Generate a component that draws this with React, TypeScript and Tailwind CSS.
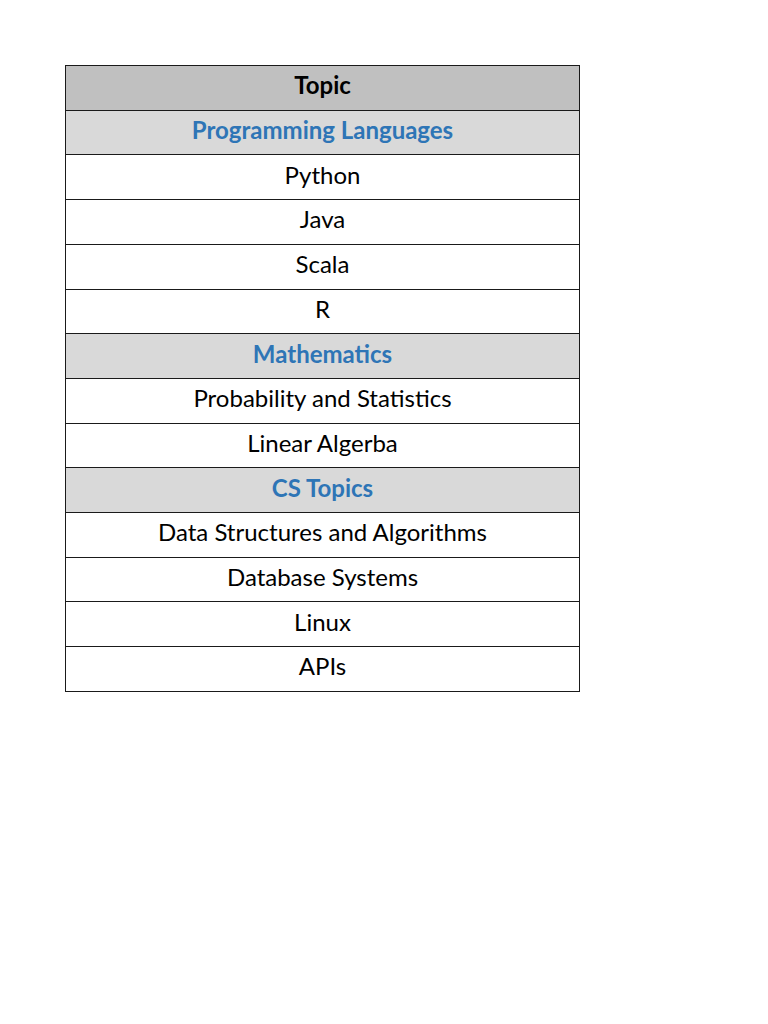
const rows: { text: string; kind: "head" | "section" | "item" }[] = [
  { text: "Topic", kind: "head" },
  { text: "Programming Languages", kind: "section" },
  { text: "Python", kind: "item" },
  { text: "Java", kind: "item" },
  { text: "Scala", kind: "item" },
  { text: "R", kind: "item" },
  { text: "Mathematics", kind: "section" },
  { text: "Probability and Statistics", kind: "item" },
  { text: "Linear Algerba", kind: "item" },
  { text: "CS Topics", kind: "section" },
  { text: "Data Structures and Algorithms", kind: "item" },
  { text: "Database Systems", kind: "item" },
  { text: "Linux", kind: "item" },
  { text: "APIs", kind: "item" },
];

const kindClass = {
  head: "bg-[#c0c0c0] font-bold text-black",
  section: "bg-[#d9d9d9] font-bold text-[#2e75b6]",
  item: "bg-white text-black",
};

export default function App() {
  return (
    <div className="min-h-screen bg-white pt-[65px] pl-[65px] font-['Lato','Carlito','Liberation_Sans',sans-serif]">
      <div className="w-[515px] border-t border-x border-[#1a1a1a]">
        {rows.map((r) => (
          <div
            key={r.text}
            className={`h-[44.71px] border-b border-[#1a1a1a] flex items-center justify-center pb-[5px] text-[24px] leading-none ${kindClass[r.kind]}`}
          >
            {r.text}
          </div>
        ))}
      </div>
    </div>
  );
}
